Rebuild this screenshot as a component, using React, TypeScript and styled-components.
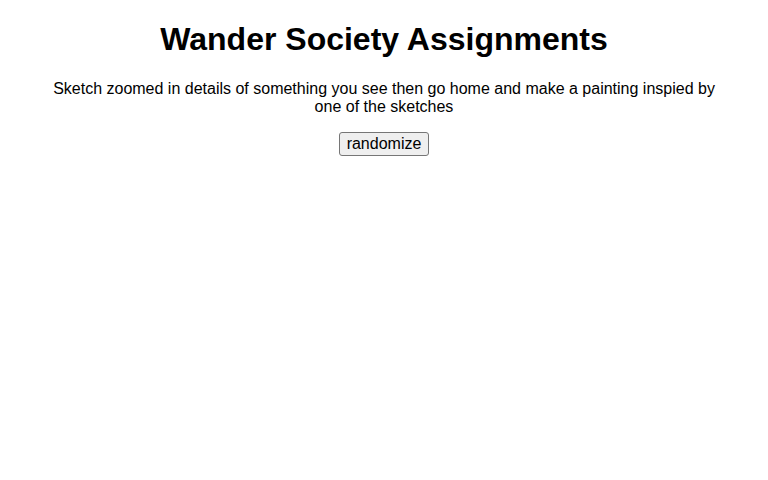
import styled, { createGlobalStyle } from "styled-components";

const GlobalStyle = createGlobalStyle`
  body {
    margin: 0 8px 8px;
    background: #ffffff;
    color: #000000;
    font-family: "Liberation Sans", Arial, sans-serif;
  }
`;

const Page = styled.main`
  padding: 0 40px;
  text-align: center;
`;

const Title = styled.h1`
  font-size: 32px;
  font-weight: bold;
  margin: 21.44px 0;
`;

const Prompt = styled.p`
  font-size: 16px;
  margin: 16px 0;
`;

const Button = styled.button`
  font-family: "Liberation Sans", Arial, sans-serif;
  font-size: 16px;
  color: #000;
  background: #efefef;
  border: 1px solid #767676;
  border-radius: 3px;
  padding: 2px 7px;
  cursor: pointer;
  &:hover {
    background: #e5e5e5;
  }
`;

const App = () => {
  return (
    <>
      <GlobalStyle />
      <Page>
        <Title>Wander Society Assignments</Title>
        <Prompt>
          Sketch zoomed in details of something you see then go home and make a
          painting inspied by one of the sketches
        </Prompt>
        <Button>randomize</Button>
      </Page>
    </>
  );
};

export default App;
